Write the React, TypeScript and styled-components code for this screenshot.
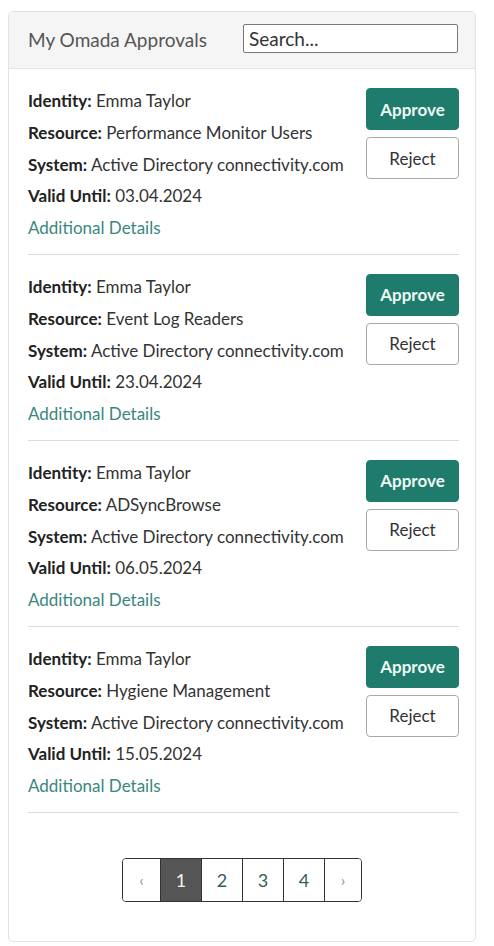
import React from "react";
import styled, { createGlobalStyle } from "styled-components";

const Global = createGlobalStyle`
  html, body { margin: 0; padding: 0; background: #ffffff; }
  body { font-family: Lato, "Noto Sans", "Liberation Sans", sans-serif; color: #333; }
  * { box-sizing: border-box; }
`;

const Card = styled.div`
  margin: 11px 0 0 8px;
  width: 468px;
  height: 931px;
  border: 1px solid #e2e2e2;
  border-radius: 5px;
  display: flex;
  flex-direction: column;
  overflow: hidden;
`;

const Header = styled.div`
  height: 57px;
  background: #f5f5f5;
  border-bottom: 1px solid #e4e4e4;
  display: flex;
  align-items: center;
  justify-content: space-between;
  padding: 0 17px 0 19px;
`;

const Title = styled.div`
  font-size: 19px;
  color: #555;
  margin-top: -2px;
`;

const Search = styled.input`
  width: 215px;
  height: 29px;
  border: 1px solid #777;
  border-radius: 2px;
  padding: 0 5px;
  font-family: inherit;
  font-size: 19px;
  color: #333;
  margin-top: -3px;
  &::placeholder { color: #333; }
`;

const List = styled.div`
  padding: 0 16px 0 19px;
`;

const Item = styled.div`
  display: flex;
  justify-content: space-between;
  padding: 16px 0 10px;
  border-bottom: 1px solid #dcdcdc;
`;

const Fields = styled.div`
  display: flex;
  flex-direction: column;
`;

const Line = styled.div`
  height: 31.8px;
  line-height: 31.8px;
  font-size: 17px;
  color: #333;
  white-space: nowrap;
`;

const Label = styled.b`
  font-weight: 700;
  color: #222;
`;

const Link = styled.a`
  height: 31.8px;
  line-height: 31.8px;
  font-size: 17px;
  color: #3a877d;
  text-decoration: none;
`;

const Actions = styled.div`
  display: flex;
  flex-direction: column;
  gap: 7px;
  margin-top: 3px;
`;

const Btn = styled.button<{ $primary?: boolean }>`
  width: 93px;
  height: 42px;
  border-radius: 4px;
  font-family: inherit;
  font-size: 17px;
  font-weight: ${(p) => (p.$primary ? 700 : 400)};
  background: ${(p) => (p.$primary ? "#1f7b6b" : "#ffffff")};
  color: ${(p) => (p.$primary ? "#eef8f4" : "#333")};
  border: 1px solid ${(p) => (p.$primary ? "#1f7b6b" : "#a9a9a9")};
  cursor: pointer;
`;

const Pager = styled.div`
  display: flex;
  justify-content: center;
  margin-top: 45px;
`;

const PagerBox = styled.div`
  display: flex;
  border: 1px solid #333;
  border-radius: 4px;
  overflow: hidden;
  height: 44px;
`;

const PageCell = styled.div<{ $active?: boolean; $arrow?: boolean }>`
  width: ${(p) => (p.$arrow ? 37 : 41)}px;
  display: flex;
  align-items: center;
  justify-content: center;
  font-size: ${(p) => (p.$arrow ? 15 : 18)}px;
  background: ${(p) => (p.$active ? "#555555" : "#ffffff")};
  color: ${(p) => (p.$active ? "#f2f2f2" : p.$arrow ? "#8a8a8a" : "#355c5c")};
  & + & { border-left: 1px solid #333; }
`;

const items = [
  { resource: "Performance Monitor Users", until: "03.04.2024" },
  { resource: "Event Log Readers", until: "23.04.2024" },
  { resource: "ADSyncBrowse", until: "06.05.2024" },
  { resource: "Hygiene Management", until: "15.05.2024" },
];

export default function App() {
  return (
    <>
      <Global />
      <Card>
        <Header>
          <Title>My Omada Approvals</Title>
          <Search placeholder="Search..." />
        </Header>
        <List>
          {items.map((it, i) => (
            <Item key={i}>
              <Fields>
                <Line><Label>Identity:</Label> Emma Taylor</Line>
                <Line><Label>Resource:</Label> {it.resource}</Line>
                <Line><Label>System:</Label> Active Directory connectivity.com</Line>
                <Line><Label>Valid Until:</Label> {it.until}</Line>
                <Link href="#">Additional Details</Link>
              </Fields>
              <Actions>
                <Btn $primary>Approve</Btn>
                <Btn>Reject</Btn>
              </Actions>
            </Item>
          ))}
        </List>
        <Pager>
          <PagerBox>
            <PageCell $arrow>‹</PageCell>
            <PageCell $active>1</PageCell>
            <PageCell>2</PageCell>
            <PageCell>3</PageCell>
            <PageCell>4</PageCell>
            <PageCell $arrow>›</PageCell>
          </PagerBox>
        </Pager>
      </Card>
    </>
  );
}
